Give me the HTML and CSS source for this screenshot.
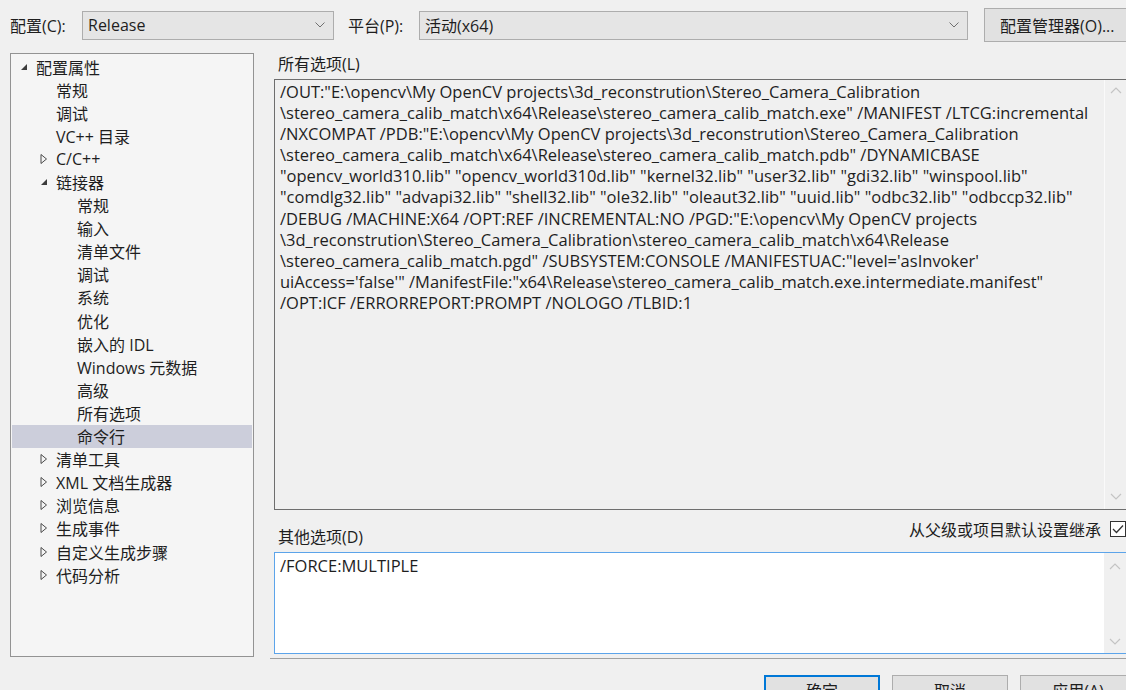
FILE: index.html
```html
<!DOCTYPE html>
<html lang="zh-CN">
<head>
    <meta charset="UTF-8">
    <title>属性页 - 命令行</title>
    <link rel="stylesheet" href="styles.css">
</head>
<body>

<div class="dialog">
    <!-- barre du haut : configuration / plateforme -->
    <div class="toolbar">
        <span class="field-label">配置(C):</span>
        <div class="combo combo-config">
            <span>Release</span>
            <svg class="chevron" width="10" height="6" viewBox="0 0 10 6"><path d="M0.5 0.5 L5 5 L9.5 0.5" fill="none" stroke="#707070" stroke-width="1"/></svg>
        </div>
        <span class="field-label platform-label">平台(P):</span>
        <div class="combo combo-platform">
            <span>活动(x64)</span>
            <svg class="chevron" width="10" height="6" viewBox="0 0 10 6"><path d="M0.5 0.5 L5 5 L9.5 0.5" fill="none" stroke="#707070" stroke-width="1"/></svg>
        </div>
        <button class="btn btn-manager">配置管理器(O)...</button>
    </div>

    <div class="main">
        <!-- arbre des propriétés -->
        <ul class="tree">
            <li class="node level-0"><span class="arrow"><svg width="8" height="8" viewBox="0 0 8 8"><polygon points="7,1 7,7 1,7" fill="#3c3c3c"/></svg></span>配置属性</li>
            <li class="node level-1"><span class="arrow"></span>常规</li>
            <li class="node level-1"><span class="arrow"></span>调试</li>
            <li class="node level-1"><span class="arrow"></span>VC++ 目录</li>
            <li class="node level-1"><span class="arrow"><svg width="8" height="10" viewBox="0 0 8 10"><polygon points="1,0.5 6.5,5 1,9.5" fill="none" stroke="#4a4a4a" stroke-width="1"/></svg></span>C/C++</li>
            <li class="node level-1"><span class="arrow"><svg width="8" height="8" viewBox="0 0 8 8"><polygon points="7,1 7,7 1,7" fill="#3c3c3c"/></svg></span>链接器</li>
            <li class="node level-2"><span class="arrow"></span>常规</li>
            <li class="node level-2"><span class="arrow"></span>输入</li>
            <li class="node level-2"><span class="arrow"></span>清单文件</li>
            <li class="node level-2"><span class="arrow"></span>调试</li>
            <li class="node level-2"><span class="arrow"></span>系统</li>
            <li class="node level-2"><span class="arrow"></span>优化</li>
            <li class="node level-2"><span class="arrow"></span>嵌入的 IDL</li>
            <li class="node level-2"><span class="arrow"></span>Windows 元数据</li>
            <li class="node level-2"><span class="arrow"></span>高级</li>
            <li class="node level-2"><span class="arrow"></span>所有选项</li>
            <li class="node level-2 selected"><span class="arrow"></span>命令行</li>
            <li class="node level-1"><span class="arrow"><svg width="8" height="10" viewBox="0 0 8 10"><polygon points="1,0.5 6.5,5 1,9.5" fill="none" stroke="#4a4a4a" stroke-width="1"/></svg></span>清单工具</li>
            <li class="node level-1"><span class="arrow"><svg width="8" height="10" viewBox="0 0 8 10"><polygon points="1,0.5 6.5,5 1,9.5" fill="none" stroke="#4a4a4a" stroke-width="1"/></svg></span>XML 文档生成器</li>
            <li class="node level-1"><span class="arrow"><svg width="8" height="10" viewBox="0 0 8 10"><polygon points="1,0.5 6.5,5 1,9.5" fill="none" stroke="#4a4a4a" stroke-width="1"/></svg></span>浏览信息</li>
            <li class="node level-1"><span class="arrow"><svg width="8" height="10" viewBox="0 0 8 10"><polygon points="1,0.5 6.5,5 1,9.5" fill="none" stroke="#4a4a4a" stroke-width="1"/></svg></span>生成事件</li>
            <li class="node level-1"><span class="arrow"><svg width="8" height="10" viewBox="0 0 8 10"><polygon points="1,0.5 6.5,5 1,9.5" fill="none" stroke="#4a4a4a" stroke-width="1"/></svg></span>自定义生成步骤</li>
            <li class="node level-1"><span class="arrow"><svg width="8" height="10" viewBox="0 0 8 10"><polygon points="1,0.5 6.5,5 1,9.5" fill="none" stroke="#4a4a4a" stroke-width="1"/></svg></span>代码分析</li>
        </ul>

        <!-- panneau de droite -->
        <div class="pane">
            <div class="pane-label">所有选项(L)</div>
            <div class="textbox textbox-all">
                <div class="text">/OUT:"E:\opencv\My OpenCV projects\3d_reconstrution\Stereo_Camera_Calibration
\stereo_camera_calib_match\x64\Release\stereo_camera_calib_match.exe" /MANIFEST /LTCG:incremental
/NXCOMPAT /PDB:"E:\opencv\My OpenCV projects\3d_reconstrution\Stereo_Camera_Calibration
\stereo_camera_calib_match\x64\Release\stereo_camera_calib_match.pdb" /DYNAMICBASE
"opencv_world310.lib" "opencv_world310d.lib" "kernel32.lib" "user32.lib" "gdi32.lib" "winspool.lib"
"comdlg32.lib" "advapi32.lib" "shell32.lib" "ole32.lib" "oleaut32.lib" "uuid.lib" "odbc32.lib" "odbccp32.lib"
/DEBUG /MACHINE:X64 /OPT:REF /INCREMENTAL:NO /PGD:"E:\opencv\My OpenCV projects
\3d_reconstrution\Stereo_Camera_Calibration\stereo_camera_calib_match\x64\Release
\stereo_camera_calib_match.pgd" /SUBSYSTEM:CONSOLE /MANIFESTUAC:"level='asInvoker'
uiAccess='false'" /ManifestFile:"x64\Release\stereo_camera_calib_match.exe.intermediate.manifest"
/OPT:ICF /ERRORREPORT:PROMPT /NOLOGO /TLBID:1</div>
                <div class="vscroll">
                    <svg width="12" height="7" viewBox="0 0 12 7"><path d="M1 6 L6 1 L11 6" fill="none" stroke="#c4c4c4" stroke-width="1.2"/></svg>
                    <svg width="12" height="7" viewBox="0 0 12 7"><path d="M1 1 L6 6 L11 1" fill="none" stroke="#c4c4c4" stroke-width="1.2"/></svg>
                </div>
            </div>

            <div class="options-row">
                <span class="pane-label">其他选项(D)</span>
                <label class="inherit">从父级或项目默认设置继承
                    <span class="checkbox"><svg width="12" height="10" viewBox="0 0 12 10"><path d="M1 5 L4.5 8.5 L11 1.5" fill="none" stroke="#333" stroke-width="1.3"/></svg></span>
                </label>
            </div>

            <div class="textbox textbox-extra">
                <div class="text">/FORCE:MULTIPLE</div>
                <div class="vscroll">
                    <svg width="12" height="7" viewBox="0 0 12 7"><path d="M1 6 L6 1 L11 6" fill="none" stroke="#c4c4c4" stroke-width="1.2"/></svg>
                    <svg width="12" height="7" viewBox="0 0 12 7"><path d="M1 1 L6 6 L11 1" fill="none" stroke="#c4c4c4" stroke-width="1.2"/></svg>
                </div>
            </div>
        </div>
    </div>

    <!-- boutons du bas -->
    <div class="footer">
        <button class="btn btn-default">确定</button>
        <button class="btn">取消</button>
        <button class="btn">应用(A)</button>
    </div>
</div>

</body>
</html>
```

FILE: styles.css
```css
* {
    margin: 0;
    padding: 0;
    box-sizing: border-box;
}

html, body {
    width: 1126px;
    height: 690px;
    overflow: hidden;
}

body {
    font-family: "Open Sans", "Noto Sans CJK SC", sans-serif;
    font-size: 16px;
    color: #1e1e1e;
    background-color: #f0f0f0;
}

.dialog {
    width: 1127px;
    padding-left: 10px;
}

/* barre du haut */
.toolbar {
    display: flex;
    align-items: center;
    height: 42px;
    padding-top: 8px;
}

.toolbar > * {
    flex-shrink: 0;
}

.field-label {
    width: 72px;
    white-space: nowrap;
}

.platform-label {
    margin-left: 14px;
    width: 71px;
}

.combo {
    display: flex;
    align-items: center;
    justify-content: space-between;
    height: 29px;
    padding: 0 8px 0 5px;
    background-color: #e5e5e5;
    border: 1px solid #adadad;
}

.combo-config {
    width: 252px;
}

.combo-platform {
    width: 549px;
}

.btn {
    font-family: inherit;
    font-size: 16px;
    color: #1e1e1e;
    background-color: #e1e1e1;
    border: 1px solid #adadad;
    height: 30px;
    width: 116px;
}

.btn-manager {
    margin-left: 16px;
    width: 152px;
    height: 34px;
    text-align: left;
    padding-left: 15px;
}

/* contenu principal */
.main {
    display: flex;
    margin-top: 11px;
}

.tree {
    list-style: none;
    width: 244px;
    height: 604px;
    padding-top: 1px;
    background-color: #f5f5f5;
    border: 1px solid #939393;
    flex-shrink: 0;
}

.node {
    display: flex;
    align-items: center;
    height: 23.1px;
    white-space: nowrap;
}

.node .arrow {
    display: flex;
    align-items: center;
    width: 16px;
    height: 100%;
}

.level-0 { padding-left: 9px; }
.level-1 { padding-left: 29px; }
.level-2 { padding-left: 50px; }

.node.selected {
    background-color: #cccedb;
    margin: 0 1px;
    padding-left: 49px;
}

.pane {
    flex: 1;
    margin-left: 16px;
    padding-left: 4px;
    padding-bottom: 4px;
    border-bottom: 1px solid #a0a0a0;
    display: flex;
    flex-direction: column;
}

.pane-label {
    height: 26px;
    line-height: 22px;
    padding-left: 4px;
    white-space: nowrap;
}

.textbox {
    display: flex;
}

.textbox .text {
    flex: 1;
    white-space: pre;
    overflow: hidden;
    font-size: 16.5px;
    line-height: 21.1px;
    padding: 1px 5px;
}

.textbox-all {
    height: 431px;
    background-color: #f0f0f0;
    border: 1px solid #6e6e6e;
    border-right: none;
}

.textbox-extra {
    height: 102px;
    background-color: #ffffff;
    border: 1px solid #5ca4ea;
    border-right: none;
}

.textbox-extra .text {
    padding-top: 2px;
}

.vscroll {
    width: 22px;
    margin-right: 1px;
    flex-shrink: 0;
    display: flex;
    flex-direction: column;
    justify-content: space-between;
    align-items: center;
    padding: 7px 0 9px;
    background-color: #f0f0f0;
    border-left: 1px solid #fafafa;
}

.textbox-extra .vscroll {
    padding: 10px 0 8px;
    border-left: none;
}

.options-row {
    display: flex;
    justify-content: space-between;
    height: 42px;
}

.options-row .pane-label {
    align-self: flex-end;
    height: auto;
    padding-bottom: 4px;
}

.inherit {
    display: flex;
    align-items: center;
    height: 18px;
    margin-top: 10px;
    white-space: nowrap;
}

.checkbox {
    display: flex;
    align-items: center;
    justify-content: center;
    width: 16px;
    height: 16px;
    margin-left: 9px;
    margin-right: 1px;
    background-color: #ffffff;
    border: 1px solid #333333;
}

/* boutons du bas */
.footer {
    display: flex;
    justify-content: flex-end;
    gap: 12px;
    margin-top: 16px;
    margin-right: -9px;
}

.btn-default {
    border: 2px solid #0078d7;
}
```
